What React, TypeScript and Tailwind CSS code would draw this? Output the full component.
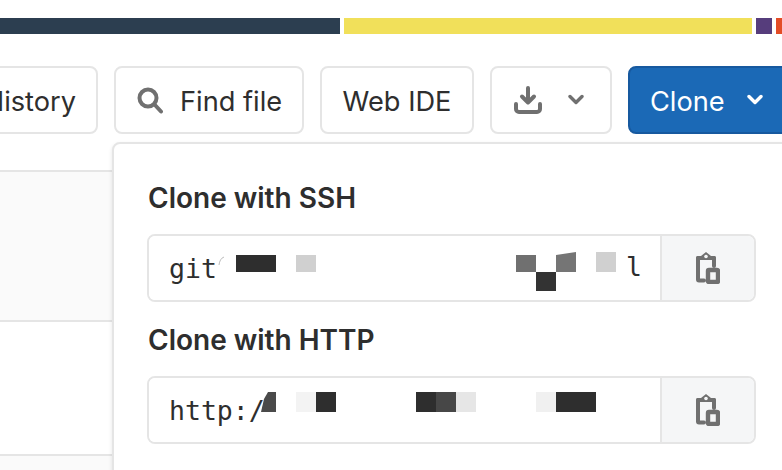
import React from "react";

function Btn({ className = "", children }: { className?: string; children: React.ReactNode }) {
  return (
    <div className={`h-[68px] shrink-0 flex items-center rounded-[8px] border-2 border-[#e5e5e5] bg-white text-[#2e2e2e] text-[27.200px] font-['Inter',sans-serif] ${className}`}>
      {children}
    </div>
  );
}

function Chevron({ color }: { color: string }) {
  return (
    <svg width="16" height="12" viewBox="0 0 16 12" fill="none">
      <path d="M2 2.500 8 8.500l6-6" stroke={color} strokeWidth="3.400" strokeLinecap="round" strokeLinejoin="round" />
    </svg>
  );
}

function Clip() {
  return (
    <svg width="24" height="32" viewBox="0 0 24 32" fill="none">
      <path d="M2 6v21.500a1 1 0 0 0 1 1h5" stroke="#707070" strokeWidth="4" strokeLinecap="round" />
      <path d="M18 6v8" stroke="#707070" strokeWidth="4" strokeLinecap="round" />
      <path d="M2 4h3l5-4 5 4h3a2 2 0 0 1 2 2v2H0V6a2 2 0 0 1 2-2Z" fill="#707070" />
      <circle cx="10" cy="4.500" r="1.800" fill="#f5f6f7" />
      <rect x="12" y="18" width="10" height="12" rx="1" stroke="#707070" strokeWidth="4.400" />
    </svg>
  );
}

function CloneField({ text, blocks }: { text: string; blocks: React.ReactNode }) {
  return (
    <div className="flex h-[68px] rounded-[8px] border-2 border-[#e5e5e5] overflow-hidden">
      <div className="relative flex-1 flex items-center pl-[20px] bg-white font-['DejaVu_Sans_Mono','Liberation_Mono',monospace] text-[26.500px] text-[#2e2e2e]">
        <span className="mt-[1px]">{text}</span>
        {blocks}
      </div>
      <div className="w-[94px] shrink-0 flex items-center justify-center bg-[#f5f6f7] border-l-2 border-[#e5e5e5]">
        <Clip />
      </div>
    </div>
  );
}

export default function App() {
  return (
    <div className="relative flex flex-col w-[782px] h-[470px] overflow-hidden bg-white font-['Inter',sans-serif]">
      <div className="flex gap-[4px] pt-[18px]">
        <div className="w-[340px] h-[16px] shrink-0 bg-[#2c3e50]" />
        <div className="w-[408px] h-[16px] shrink-0 bg-[#f1e05a]" />
        <div className="w-[16px] h-[16px] shrink-0 bg-[#563d7c]" />
        <div className="w-[16px] h-[16px] shrink-0 bg-[#e34c26]" />
      </div>

      <div className="flex gap-[16px] mt-[32px] ml-[-60px] w-[900px]">
        <Btn className="w-[158px] justify-end pr-[20px]"><span className="mt-[5px]">History</span></Btn>
        <Btn className="w-[190px] pl-[21px] gap-[17px]">
          <svg className="mt-[1px]" width="26" height="27" viewBox="0 0 26 27" fill="none">
            <circle cx="11" cy="11" r="8.500" stroke="#707070" strokeWidth="4" />
            <path d="m17.500 17.500 6.500 7" stroke="#707070" strokeWidth="4" strokeLinecap="round" />
          </svg>
          <span className="mt-[5px]">Find file</span>
        </Btn>
        <Btn className="w-[154px] justify-center"><span className="mt-[5px]">Web IDE</span></Btn>
        <Btn className="w-[122px] pl-[22px] gap-[26px]">
          <svg width="28" height="28" viewBox="0 0 28 28" fill="none">
            <path d="M14 2v14M8 10.500l6 6 6-6" stroke="#707070" strokeWidth="4" strokeLinecap="round" strokeLinejoin="round" />
            <path d="M2 18v5a3 3 0 0 0 3 3h18a3 3 0 0 0 3-3v-5" stroke="#707070" strokeWidth="4" strokeLinecap="round" />
          </svg>
          <Chevron color="#707070" />
        </Btn>
        <div className="h-[68px] w-[170px] shrink-0 flex items-center pl-[20px] gap-[22px] rounded-[8px] border-2 border-[#17599f] bg-[#1b69b6] text-white text-[27.200px]">
          <span className="mt-[5px]">Clone</span>
          <Chevron color="#ffffff" />
        </div>
      </div>

      <div className="mt-[36px] h-[152px] shrink-0 bg-[#fafafa] border-y-2 border-[#e5e5e5]" />
      <div className="h-[134px] shrink-0 bg-white border-b-2 border-[#e5e5e5]" />
      <div className="flex-1 bg-[#fafafa]" />

      <div className="absolute left-[112px] top-[142px] w-[720px] h-[360px] bg-white rounded-[8px] border-2 border-[#e5e5e5] shadow-[0_2px_4px_rgba(0,0,0,0.1)] pt-[37px] pl-[33px]">
        <div className="w-[609px]">
          <h3 className="ml-[1px] text-[28px] leading-[34px] font-semibold text-[#2e2e2e] mb-[19px]">Clone with SSH</h3>
          <CloneField
            text="git"
            blocks={
              <>
                <svg className="absolute left-[69px] top-[20px]" width="8" height="10" viewBox="0 0 8 10" fill="none">
                  <path d="M6 1C3 2 1.500 5 1 9" stroke="#bdbdbd" strokeWidth="1" />
                </svg>
                <div className="absolute left-[87px] top-[19px] w-[40px] h-[17px] bg-[#2e2e2e]" />
                <div className="absolute left-[147px] top-[19px] w-[20px] h-[17px] bg-[#d0d0d0]" />
                <div className="absolute left-[367px] top-[19px] w-[20px] h-[17px] bg-[#707070]" />
                <div className="absolute left-[387px] top-[36px] w-[20px] h-[19px] bg-[#333333]" />
                <div className="absolute left-[407px] top-[16px] w-[20px] h-[20px] bg-[#757575] [clip-path:polygon(0_15%,100%_0,100%_100%,0_100%)]" />
                <div className="absolute left-[447px] top-[16px] w-[20px] h-[20px] bg-[#d0d0d0]" />
                <span className="absolute left-[477px] top-[15px] leading-[32px]">l</span>
              </>
            }
          />
          <h3 className="ml-[1px] text-[28px] leading-[34px] font-semibold text-[#2e2e2e] mt-[21px] mb-[19px]">Clone with HTTP</h3>
          <CloneField
            text="http:/"
            blocks={
              <>
                <div className="absolute left-[107px] top-[14px] w-[20px] h-[20px] bg-[#4a4a4a] [clip-path:polygon(25%_100%,40%_35%,60%_0,100%_0,100%_100%)]" />
                <div className="absolute left-[147px] top-[14px] w-[20px] h-[20px] bg-[#f3f3f3]" />
                <div className="absolute left-[167px] top-[14px] w-[20px] h-[20px] bg-[#2e2e2e]" />
                <div className="absolute left-[267px] top-[14px] w-[20px] h-[20px] bg-[#2e2e2e]" />
                <div className="absolute left-[287px] top-[14px] w-[20px] h-[20px] bg-[#474747]" />
                <div className="absolute left-[307px] top-[14px] w-[20px] h-[20px] bg-[#e6e6e6]" />
                <div className="absolute left-[387px] top-[14px] w-[20px] h-[20px] bg-[#f0f0f0]" />
                <div className="absolute left-[407px] top-[14px] w-[40px] h-[20px] bg-[#2e2e2e]" />
              </>
            }
          />
        </div>
      </div>
    </div>
  );
}
